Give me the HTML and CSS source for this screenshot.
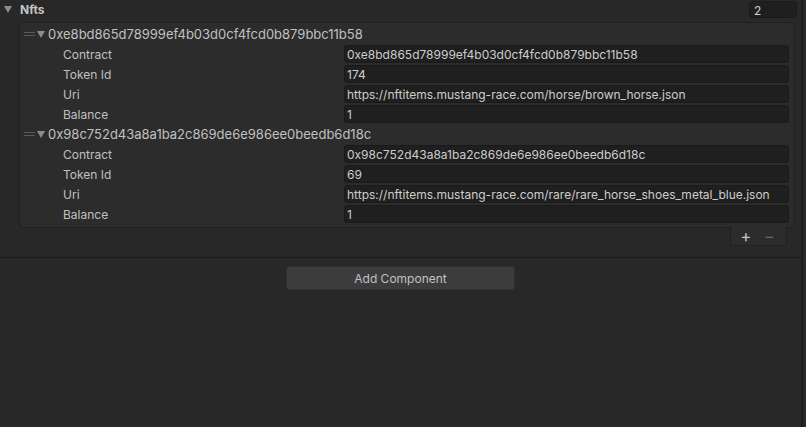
FILE: index.html
```html
<!DOCTYPE html>
<html lang="en">
<head>
<meta charset="UTF-8">
<title>Inspector - Nfts</title>
<link rel="stylesheet" href="styles.css">
</head>
<body>
<div class="inspector">
  <div class="prop-head">
    <span class="fold"></span>
    <span class="prop-name">Nfts</span>
    <div class="size-field">2</div>
  </div>

  <div class="list">
    <div class="el-head">
      <span class="handle"></span>
      <span class="fold small"></span>
      <span class="el-name">0xe8bd865d78999ef4b03d0cf4fcd0b879bbc11b58</span>
    </div>
    <div class="row"><span class="label">Contract</span><div class="field">0xe8bd865d78999ef4b03d0cf4fcd0b879bbc11b58</div></div>
    <div class="row"><span class="label">Token Id</span><div class="field">174</div></div>
    <div class="row"><span class="label">Uri</span><div class="field">https://nftitems.mustang-race.com/horse/brown_horse.json</div></div>
    <div class="row"><span class="label">Balance</span><div class="field">1</div></div>

    <div class="el-head">
      <span class="handle"></span>
      <span class="fold small"></span>
      <span class="el-name">0x98c752d43a8a1ba2c869de6e986ee0beedb6d18c</span>
    </div>
    <div class="row"><span class="label">Contract</span><div class="field">0x98c752d43a8a1ba2c869de6e986ee0beedb6d18c</div></div>
    <div class="row"><span class="label">Token Id</span><div class="field">69</div></div>
    <div class="row"><span class="label">Uri</span><div class="field">https://nftitems.mustang-race.com/rare/rare_horse_shoes_metal_blue.json</div></div>
    <div class="row"><span class="label">Balance</span><div class="field">1</div></div>
  </div>

  <div class="list-foot">
    <div class="footer-btns">
      <span class="plus">+</span>
      <span class="minus">&minus;</span>
    </div>
  </div>

  <div class="separator"></div>

  <div class="add-wrap">
    <button class="add-btn">Add Component</button>
  </div>
</div>
</body>
</html>
```

FILE: styles.css
```css
html,body{margin:0;height:100%}
body{background:#282828;font-family:Inter,"Noto Sans",sans-serif;font-size:12px;color:#c0c0c0}
.inspector{width:801px;height:100%;border-right:2px solid #1b1b1b;box-sizing:content-box}

.prop-head{display:flex;align-items:center;height:18px;padding:0 4px 0 4px}
.fold{width:0;height:0;border-left:4px solid transparent;border-right:4px solid transparent;border-top:7px solid #8c8c8c;margin-right:8px}
.prop-name{font-weight:bold;color:#c4c4c4}
.size-field{margin-left:auto;width:48px;height:17px;line-height:17px;box-sizing:border-box;padding-left:4px;background:#1f1f1f;border:1px solid #1a1a1a;border-radius:3px;color:#cfcfcf;margin-top:1px}

.list{margin:4px 6px 0 19px;border:1px solid #202020;border-radius:4px;background:#2c2c2c;padding:1px 5px 3px 0}
.el-head{display:flex;align-items:center;height:20px;padding-left:4px}
.handle{width:11px;height:4px;border-top:1px solid #5a5a5a;border-bottom:1px solid #5a5a5a;margin-right:2px;box-sizing:border-box}
.fold.small{margin-right:3px}
.el-name{font-size:13px;color:#c0c0c0}
.row{display:grid;grid-template-columns:281px 1fr;align-items:center;height:20px;padding-left:43px}
.label{color:#c0c0c0}
.field{height:18px;line-height:17px;box-sizing:border-box;padding-left:2px;background:#1f1f1f;border:1px solid #1a1a1a;border-radius:3px;color:#cdcdcd;white-space:nowrap;overflow:hidden}

.list-foot{display:flex;justify-content:flex-end;padding-right:14px}
.footer-btns{width:57px;height:19px;margin-top:-1px;box-sizing:border-box;background:#2c2c2c;border:1px solid #202020;border-top:none;border-radius:0 0 4px 4px;display:flex;align-items:center;justify-content:space-around;padding:0 5px 0 3px}
.plus{color:#c4c4c4;font-size:17px}
.minus{color:#666;font-size:16px}

.separator{height:1px;background:#191919;margin-top:11px}
.add-wrap{display:flex;justify-content:center;padding-top:8px}
.add-btn{width:229px;height:24px;background:#3c3c3c;border:1px solid #303030;border-radius:3px;color:#c0c0c0;font-family:Inter,"Noto Sans",sans-serif;font-size:12px}
```
